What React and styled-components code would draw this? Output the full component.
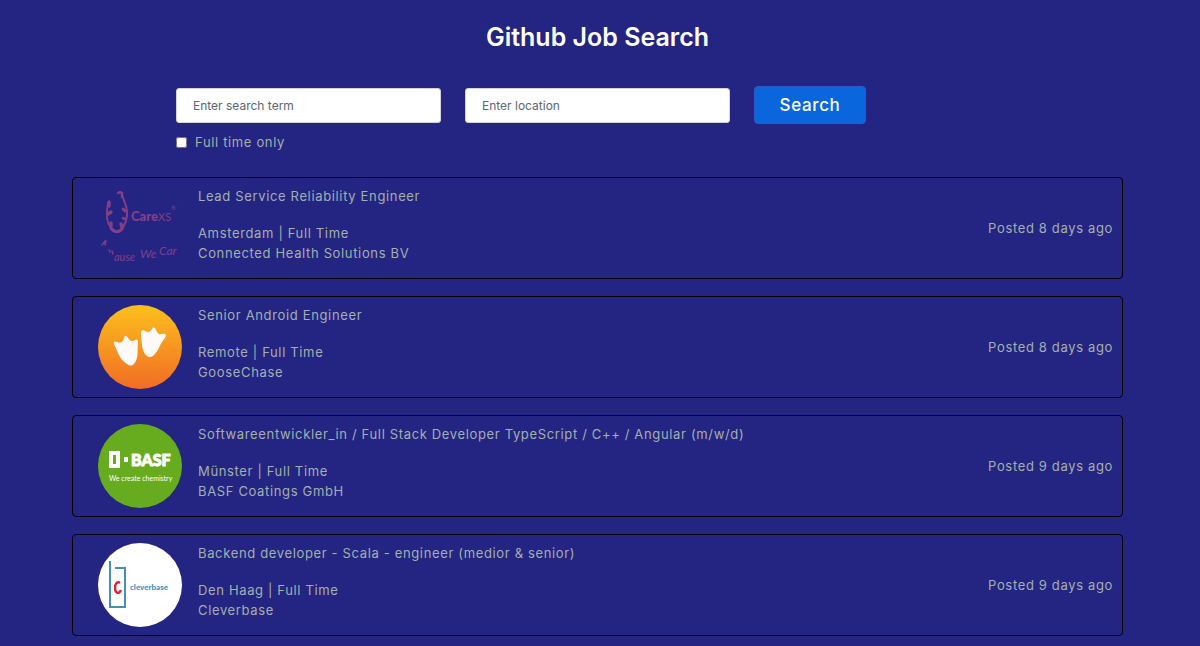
import React from "react";
import styled, { createGlobalStyle } from "styled-components";

const GlobalStyle = createGlobalStyle`
  * {
    box-sizing: border-box;
    margin: 0;
    padding: 0;
  }

  body {
    color: #a3b0ac;
    background: #242582;
    font-family: Inter, "Liberation Sans", sans-serif;
    font-size: 13px;
    line-height: 20px;
    letter-spacing: 0.05em;
  }
`;

const Page = styled.div`
  padding: 19px 77px 11px 72px;
`;

const Title = styled.h1`
  color: #fff;
  font-size: 25px;
  font-weight: 600;
  line-height: 36px;
  letter-spacing: 0;
  text-align: center;
`;

const SearchForm = styled.form`
  margin: 31px 104px 24px;
`;

const Fields = styled.div`
  display: flex;
  align-items: center;
  gap: 24px;
`;

const TextField = styled.input`
  flex: 0 1 265px;
  min-width: 0;
  height: 35px;
  padding: 0 16px;
  color: #495057;
  background: #fff;
  border: 1px solid #ced4da;
  border-radius: 3px;
  font-family: inherit;
  font-size: 12px;

  &::placeholder {
    color: #5b666f;
    opacity: 1;
  }
`;

const SearchButton = styled.button`
  width: 112px;
  height: 38px;
  color: #fff;
  background: #0a66dc;
  border: 1px solid #2a5cc4;
  border-radius: 4px;
  font-family: inherit;
  font-size: 17px;
  font-weight: 500;
  letter-spacing: inherit;
`;

const CheckLabel = styled.label`
  display: inline-flex;
  align-items: center;
  gap: 8px;
  margin-top: 8px;
`;

const Checkbox = styled.input`
  width: 11px;
  height: 11px;
`;

const JobList = styled.ul`
  display: flex;
  flex-direction: column;
  gap: 17px;
  list-style: none;
`;

const JobCard = styled.li`
  display: flex;
  align-items: center;
  gap: 16px;
  padding: 8px 9px 8px 25px;
  border: 1px solid #000;
  border-radius: 4px;
`;

const Logo = styled.svg`
  flex: none;
  width: 84px;
  height: 84px;
  font-family: Lato, sans-serif;
  letter-spacing: 0;
`;

const JobInfo = styled.div`
  flex: 1;
  align-self: flex-start;
`;

const JobTitle = styled.h2`
  margin-bottom: 17px;
  font-size: inherit;
  font-weight: 400;
`;

function CareXsLogo() {
  return (
    <Logo viewBox="0 0 84 84" role="img" aria-label="CareXS">
      <g fill="none" stroke="#843f87" strokeLinecap="round">
        <path d="M10 17C8 27 9 37 13 42" strokeWidth="1.8" />
        <path d="M13 42c3 5 9 5 12-1" strokeWidth="3" />
        <path d="M25 41c4-6 5-14 3-21L24 9" strokeWidth="2" />
        <path d="M11 16v4M10 28l3-2" strokeWidth="3.4" />
        <path d="M20 7l2-1 2 1v4" strokeWidth="2.4" />
        <path d="M27 25l-2-2M27 33l-2-1" strokeWidth="2.6" />
        <path d="M13 37v3M23 38l1 3" strokeWidth="3.4" />
        <path d="M4 59l4-5-1 5M11 64l1 2M14 65l1 3" strokeWidth="1.4" />
      </g>
      <g fill="#843f87">
        <text x="33" y="35" fontSize="13" fontWeight="900">
          Care
        </text>
        <text x="60" y="35" fontSize="11">
          XS
        </text>
        <text x="73" y="24" fontSize="6">
          ®
        </text>
        <g fontStyle="italic">
          <text x="16" y="75" fontSize="11">
            ause
          </text>
          <text x="42" y="72" fontSize="12">
            We
          </text>
          <text x="61" y="69" fontSize="12">
            Car
          </text>
        </g>
      </g>
    </Logo>
  );
}

function GooseChaseLogo() {
  return (
    <Logo viewBox="0 0 84 84" role="img" aria-label="GooseChase">
      <defs>
        <linearGradient id="goose" x1="0" y1="0" x2="0" y2="1">
          <stop offset="0" stopColor="#fcc01c" />
          <stop offset="1" stopColor="#f26c25" />
        </linearGradient>
      </defs>
      <circle cx="42" cy="42" r="42" fill="url(#goose)" />
      <g fill="#fffafa">
        <path d="M16 39c-1-2 1-3 3-2 3 1 6 1 7-4 1-3 2-3 4 0 2 3 4 4 7 2 2-1 3 0 3 2-1 9 1 16-4 22-2 2-4 2-7 0-8-5-9-12-13-20z" />
        <path d="M43 28c0-3 2-4 4-2 3 2 5 1 7-2 1-2 3-2 4 1 1 3 3 5 6 4 4-1 5 1 3 4-5 5-6 13-12 18-3 2-6 1-8-2-4-6-3-13-4-21z" />
      </g>
    </Logo>
  );
}

function BasfLogo() {
  return (
    <Logo viewBox="0 0 84 84" role="img" aria-label="BASF">
      <circle cx="42" cy="42" r="42" fill="#67ac1f" />
      <path d="M11 27h11v17H11zM15 31v9h3v-9z" fill="#fff" fillRule="evenodd" />
      <rect x="26" y="33" width="4" height="5" fill="#fff" />
      <g fill="#fff">
        <text x="33" y="42" fontSize="16" fontWeight="900" stroke="#fff" strokeWidth="1">
          BASF
        </text>
        <text x="11" y="57" fontSize="7">
          We create chemistry
        </text>
      </g>
    </Logo>
  );
}

function CleverbaseLogo() {
  return (
    <Logo viewBox="0 0 84 84" role="img" aria-label="Cleverbase">
      <circle cx="42" cy="42" r="42" fill="#fff" />
      <path d="M12 18v46h15V25H17" fill="none" stroke="#4390bd" strokeWidth="2" />
      <path d="M22 40c-3-2-5 1-5 5 0 5 4 7 6 2" fill="none" stroke="#dc2430" strokeWidth="2.4" />
      <text x="32" y="47" fill="#4390bd" fontSize="8" fontWeight="900">
        cleverbase
      </text>
    </Logo>
  );
}

const jobs = [
  {
    logo: CareXsLogo,
    title: "Lead Service Reliability Engineer",
    location: "Amsterdam",
    company: "Connected Health Solutions BV",
    posted: "8 days ago",
  },
  {
    logo: GooseChaseLogo,
    title: "Senior Android Engineer",
    location: "Remote",
    company: "GooseChase",
    posted: "8 days ago",
  },
  {
    logo: BasfLogo,
    title: "Softwareentwickler_in / Full Stack Developer TypeScript / C++ / Angular (m/w/d)",
    location: "Münster",
    company: "BASF Coatings GmbH",
    posted: "9 days ago",
  },
  {
    logo: CleverbaseLogo,
    title: "Backend developer - Scala - engineer (medior & senior)",
    location: "Den Haag",
    company: "Cleverbase",
    posted: "9 days ago",
  },
];

export default function App() {
  return (
    <>
      <GlobalStyle />
      <Page>
        <Title>Github Job Search</Title>
        <SearchForm onSubmit={(e) => e.preventDefault()}>
          <Fields>
            <TextField type="text" aria-label="Search term" placeholder="Enter search term" />
            <TextField type="text" aria-label="Location" placeholder="Enter location" />
            <SearchButton type="submit">Search</SearchButton>
          </Fields>
          <CheckLabel htmlFor="full-time">
            <Checkbox type="checkbox" id="full-time" />
            Full time only
          </CheckLabel>
        </SearchForm>
        <JobList>
          {jobs.map((job) => (
            <JobCard key={job.title}>
              <job.logo />
              <JobInfo>
                <JobTitle>{job.title}</JobTitle>
                <p>{job.location} | Full Time</p>
                <p>{job.company}</p>
              </JobInfo>
              <p>Posted {job.posted}</p>
            </JobCard>
          ))}
        </JobList>
      </Page>
    </>
  );
}
